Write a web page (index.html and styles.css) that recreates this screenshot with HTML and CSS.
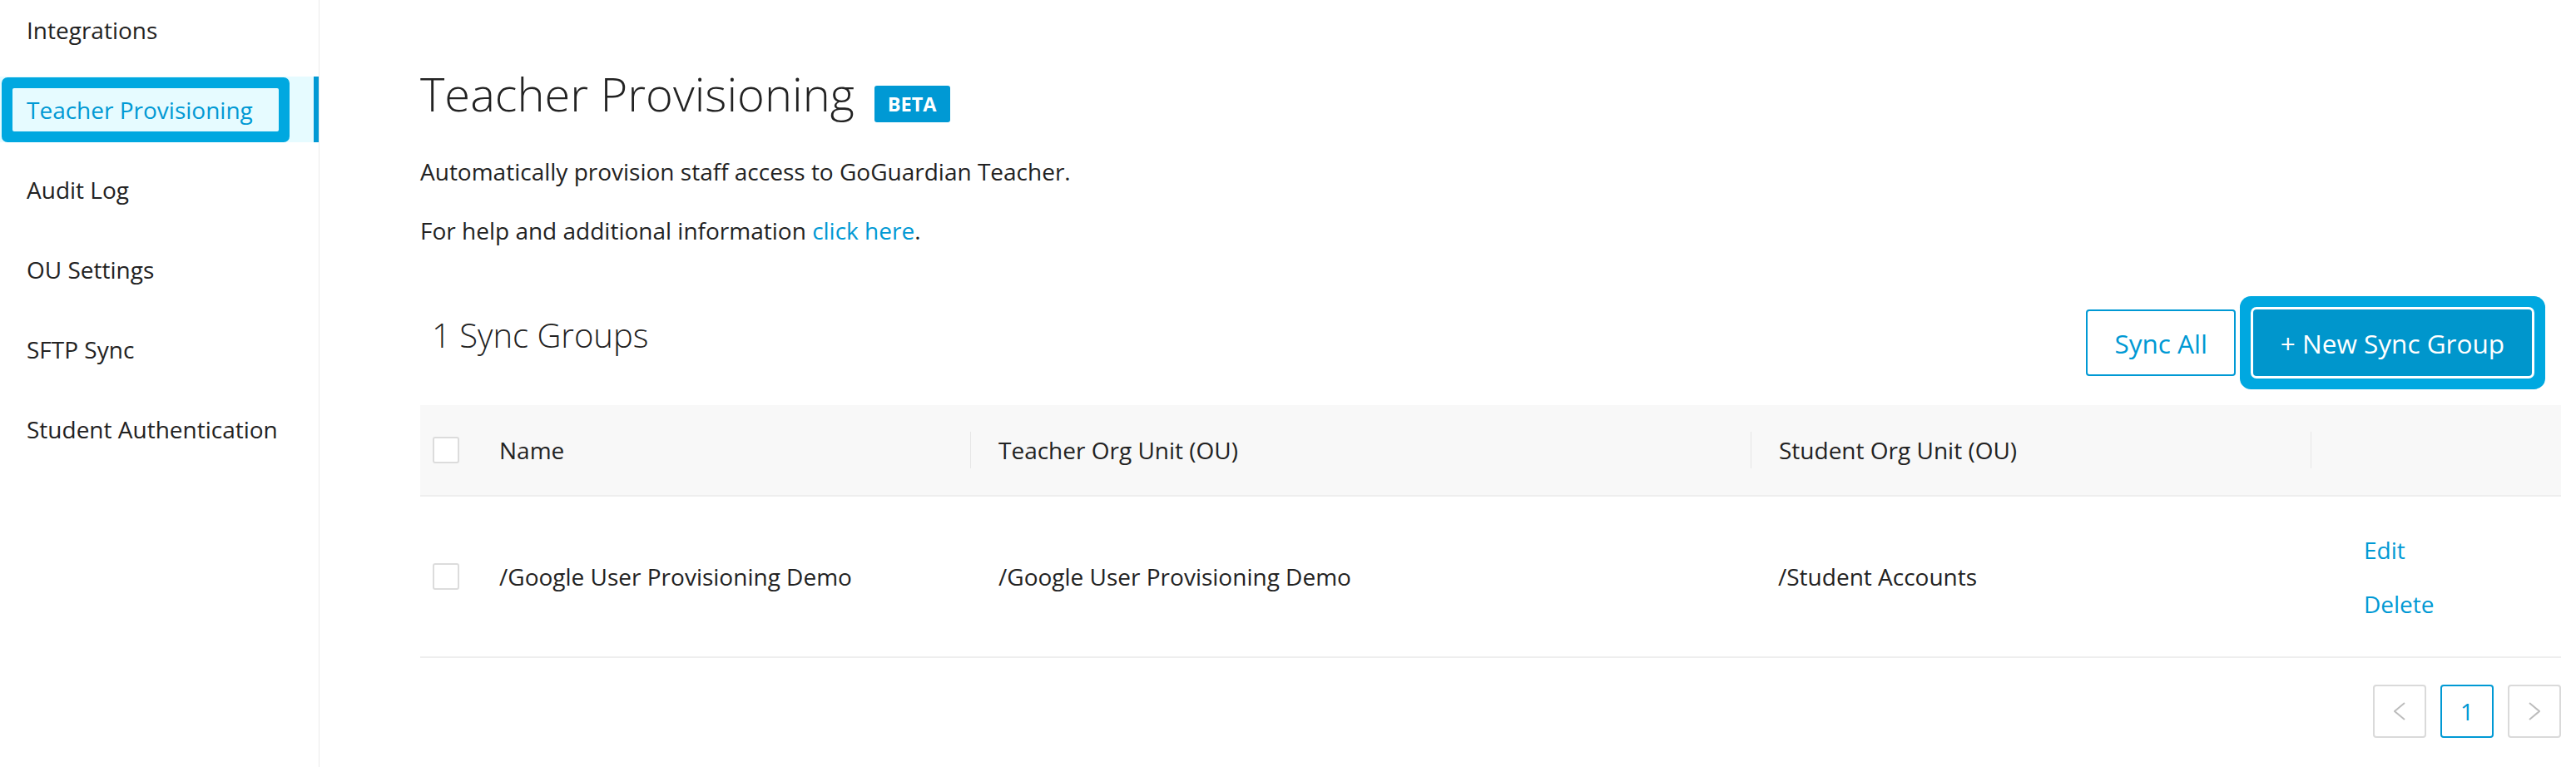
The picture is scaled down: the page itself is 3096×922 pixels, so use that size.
FILE: index.html
```html
<!DOCTYPE html>
<html lang="en">
<head>
    <meta charset="UTF-8">
    <meta name="viewport" content="width=device-width, initial-scale=1.0">
    <title>Teacher Provisioning</title>
    <link rel="stylesheet" href="styles.css">
</head>
<body>

<div class="layout">
    <nav class="sidebar">
        <ul>
            <li><a href="#">Integrations</a></li>
            <li class="active"><a href="#" class="focused">Teacher Provisioning</a></li>
            <li><a href="#">Audit Log</a></li>
            <li><a href="#">OU Settings</a></li>
            <li><a href="#">SFTP Sync</a></li>
            <li><a href="#">Student Authentication</a></li>
        </ul>
    </nav>

    <main class="content">
        <h1 class="page-title">Teacher Provisioning <span class="badge">BETA</span></h1>
        <p class="intro">Automatically provision staff access to GoGuardian Teacher.</p>
        <p class="help">For help and additional information <a href="#">click here</a>.</p>

        <div class="toolbar">
            <h2>1 Sync Groups</h2>
            <div class="toolbar-actions">
                <button class="btn btn-outline">Sync All</button>
                <button class="btn btn-primary focused">+ New Sync Group</button>
            </div>
        </div>

        <div class="sync-table">
            <div class="table-row table-head">
                <div class="cell cell-check"><span class="checkbox"></span></div>
                <div class="cell cell-name"><span>Name</span></div>
                <div class="cell cell-sep"><span>Teacher Org Unit (OU)</span></div>
                <div class="cell cell-sep"><span>Student Org Unit (OU)</span></div>
                <div class="cell cell-sep cell-actions"></div>
            </div>
            <div class="table-row table-body">
                <div class="cell cell-check"><span class="checkbox"></span></div>
                <div class="cell cell-name">/Google User Provisioning Demo</div>
                <div class="cell cell-teacher">/Google User Provisioning Demo</div>
                <div class="cell cell-student">/Student Accounts</div>
                <div class="cell cell-actions">
                    <a href="#">Edit</a>
                    <a href="#">Delete</a>
                </div>
            </div>
        </div>

        <div class="pagination">
            <button class="page-btn" aria-label="Previous">
                <svg width="14" height="22" viewBox="0 0 14 22"><path d="M13 1 L1 11 L13 21" fill="none" stroke="#bdbdbd" stroke-width="2"/></svg>
            </button>
            <button class="page-btn current">1</button>
            <button class="page-btn" aria-label="Next">
                <svg width="14" height="22" viewBox="0 0 14 22"><path d="M1 1 L13 11 L1 21" fill="none" stroke="#bdbdbd" stroke-width="2"/></svg>
            </button>
        </div>
    </main>
</div>

</body>
</html>
```

FILE: styles.css
```css
body {
    font-family: "Open Sans", "Liberation Sans", sans-serif;
    color: #222;
    background-color: #fff;
    margin: 0;
    padding: 0;
}
a {
    color: #0099d4;
    text-decoration: none;
}
.layout {
    display: flex;
    min-height: 100vh;
}

/* sidebar */
.sidebar {
    width: 383px;
    flex-shrink: 0;
    border-right: 1px solid #ececec;
}
.sidebar ul {
    list-style: none;
    margin: -4px 0 0;
    padding: 0;
    display: flex;
    flex-direction: column;
    gap: 17px;
}
.sidebar li {
    height: 79px;
    display: flex;
    align-items: center;
}
.sidebar li a {
    display: block;
    margin-left: 15px;
    padding: 0 17px;
    height: 52px;
    line-height: 52px;
    font-size: 28px;
    color: #222;
}
.sidebar li.active {
    background-color: #e6fbff;
    border-right: 6px solid #0099d4;
}
.sidebar li.active a {
    color: #0099d4;
    width: 286px;
}
.focused {
    border-radius: 2px;
    box-shadow: 0 0 0 13px #00a8e0;
}

/* main */
.content {
    flex: 1;
    padding: 74px 18px 0 121px;
}
.page-title {
    margin: 0;
    display: flex;
    align-items: baseline;
    gap: 24px;
    font-size: 56px;
    font-weight: 300;
    line-height: 76px;
    color: #222;
}
.badge {
    display: inline-block;
    background-color: #0099d4;
    color: white;
    font-size: 23.5px;
    font-weight: 700;
    line-height: 44px;
    height: 44px;
    padding: 0 16px;
    border-radius: 3px;
}
.intro, .help {
    font-size: 28px;
    line-height: 40px;
    margin: 36px 0 0;
}
.help {
    margin-top: 31px;
}

.toolbar {
    margin-top: 75px;
    display: flex;
    justify-content: space-between;
    align-items: flex-start;
}
.toolbar h2 {
    margin: 3px 0 0 14px;
    font-size: 40px;
    font-weight: 300;
    line-height: 56px;
}
.toolbar-actions {
    display: flex;
    gap: 21px;
    margin-right: 35px;
}
.btn {
    font-family: inherit;
    font-size: 31.5px;
    height: 80px;
    padding: 0 32px;
    border-radius: 4px;
    cursor: pointer;
}
.btn-outline {
    background: white;
    color: #0099d4;
    border: 2px solid #0099d4;
}
.btn-primary {
    background-color: #0096cc;
    color: white;
    border: none;
    padding: 0 33px;
    box-shadow: 0 0 0 3px #fff, 0 0 0 16px #00a8e0;
}

/* table */
.sync-table {
    margin-top: 35px;
}
.table-row {
    display: grid;
    grid-template-columns: 80px 581fr 938fr 673fr 301fr;
    align-items: center;
    border-bottom: 2px solid #eeeeee;
    font-size: 28px;
}
.table-head {
    height: 108px;
    background-color: #f8f8f8;
}
.table-body {
    height: 192px;
}
.cell-check {
    padding-left: 15px;
    display: flex;
}
.checkbox {
    display: inline-block;
    width: 28px;
    height: 28px;
    border: 2px solid #dcdcdc;
    border-radius: 3px;
    background: white;
}
.cell-name {
    padding-left: 15px;
}
.cell-sep {
    height: 44px;
    display: flex;
    align-items: center;
    border-left: 1px solid #e6e6e6;
    padding-left: 33px;
}
.cell-teacher {
    padding-left: 34px;
}
.cell-student {
    padding-left: 33px;
}
.table-body .cell-actions {
    padding-left: 64px;
    display: flex;
    flex-direction: column;
    gap: 25px;
    line-height: 40px;
}

/* pagination */
.pagination {
    margin-top: 32px;
    display: flex;
    justify-content: flex-end;
    gap: 17px;
}
.page-btn {
    width: 64px;
    height: 64px;
    border: 2px solid #dadada;
    border-radius: 4px;
    background: white;
    display: flex;
    align-items: center;
    justify-content: center;
    font-family: inherit;
    font-size: 28px;
    padding: 0;
}
.page-btn.current {
    border-color: #0099d4;
    color: #0099d4;
}
```
